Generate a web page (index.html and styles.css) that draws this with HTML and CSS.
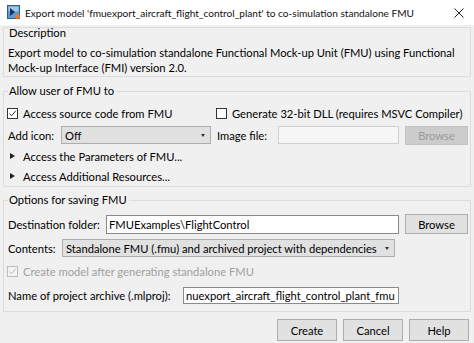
FILE: index.html
```html
<!DOCTYPE html>
<html>
<head>
<meta charset="utf-8">
<link rel="stylesheet" href="styles.css">
</head>
<body>
<div class="titlebar">
  <svg class="app-icon" width="14" height="15" viewBox="0 0 14 15">
    <rect x="0.5" y="0.5" width="12" height="13" fill="#5b9bd5" stroke="#2e5f8f"/>
    <rect x="1.5" y="1.5" width="10" height="5" fill="#9cc7ee"/>
    <path d="M3 3 L8 7 L3 11 Z" fill="#1f3550"/>
    <circle cx="10.5" cy="11.5" r="2.5" fill="#e8792b"/>
  </svg>
  <span class="title">Export model 'fmuexport_aircraft_flight_control_plant' to co-simulation standalone FMU</span>
  <svg class="close" width="10" height="10" viewBox="0 0 10 10">
    <path d="M0.5 0.5 L9.5 9.5 M9.5 0.5 L0.5 9.5" stroke="#222" stroke-width="1"/>
  </svg>
</div>
<div class="content">
  <div class="desc">
    <div class="desc-title">Description</div>
    <div class="desc-text">Export model to co-simulation standalone Functional Mock-up Unit (FMU) using Functional<br>Mock-up Interface (FMI) version 2.0.</div>
  </div>

  <fieldset class="group allow">
    <legend>Allow user of FMU to</legend>
    <div class="row r22">
      <div class="col1">
        <span class="cb"><svg width="9" height="9" viewBox="0 0 9 9"><path d="M1.5 4.5 L3.5 6.8 L7.8 1.8" fill="none" stroke="#333" stroke-width="1"/></svg></span>
        <span>Access source code from FMU</span>
      </div>
      <div class="col2">
        <span class="cb"></span>
        <span>Generate 32-bit DLL (requires MSVC Compiler)</span>
      </div>
    </div>
    <div class="row r22">
      <div class="col1">
        <span>Add icon:</span>
        <div class="select sel-icon"><span>Off</span><span class="arrow"></span></div>
      </div>
      <div class="col2">
        <span>Image file:</span>
        <div class="input disabled img-input"></div>
        <div class="btn disabled browse">Browse</div>
      </div>
    </div>
    <div class="row r20"><span class="tri"></span><span>Access the Parameters of FMU...</span></div>
    <div class="row r20"><span class="tri"></span><span>Access Additional Resources...</span></div>
  </fieldset>

  <fieldset class="group options">
    <legend>Options for saving FMU</legend>
    <div class="row r24">
      <span class="lbl lbl-dest">Destination folder:</span>
      <div class="input dest-input">FMUExamples\FlightControl</div>
      <div class="btn browse dest-browse">Browse</div>
    </div>
    <div class="row r24">
      <span class="lbl lbl-contents">Contents:</span>
      <div class="select sel-contents"><span>Standalone FMU (.fmu) and archived project with dependencies</span><span class="arrow"></span></div>
    </div>
    <div class="row r23 dis-text">
      <span class="cb cb-dis"><svg width="9" height="9" viewBox="0 0 9 9"><path d="M1.5 4.5 L3.5 6.8 L7.8 1.8" fill="none" stroke="#bdbdbd" stroke-width="1"/></svg></span>
      <span>Create model after generating standalone FMU</span>
    </div>
    <div class="row r24">
      <span class="lbl lbl-name">Name of project archive (.mlproj):</span>
      <div class="input name-input">nuexport_aircraft_flight_control_plant_fmu</div>
    </div>
  </fieldset>

  <div class="buttons">
    <div class="btn action">Create</div>
    <div class="btn action">Cancel</div>
    <div class="btn action">Help</div>
  </div>
</div>
</body>
</html>
```

FILE: styles.css
```css
* { box-sizing: border-box; }
html, body { margin: 0; padding: 0; }
body {
  width: 474px;
  height: 343px;
  overflow: hidden;
  background: #f0f0f0;
  font-family: Lato, "Open Sans", sans-serif;
  font-size: 11.2px;
  color: #000;
}
.titlebar {
  height: 25px;
  background: #fff;
  display: flex;
  align-items: center;
}
.app-icon { margin-left: 7px; flex: none; }
.title { margin-left: 4px; font-size: 10.1px; white-space: nowrap; color: #111; }
.close { margin-left: auto; margin-right: 10px; flex: none; }

.content { padding: 2px 3px 0 3px; }

.desc {
  border: 1px solid #dcdcdc;
  padding: 0 4px 1px 4px;
}
.desc-title { line-height: 10px; padding-left: 1px; }
.desc-text { margin-top: 7px; line-height: 15px; white-space: nowrap; }

.group {
  margin: 0;
  border: 1px solid #dcdcdc;
  padding: 3px 2px 0 4px;
  min-width: 0;
}
.group legend {
  padding: 0 2px 0 1px;
  line-height: 16px;
}
.allow { margin-top: 6px; }
.options { margin-top: 5px; padding-top: 4px; padding-bottom: 4px; }

.row { display: flex; align-items: center; white-space: nowrap; }
.r20 { height: 20px; }
.r22 { height: 22px; }
.r23 { height: 23px; }
.r24 { height: 24px; }

.col1 { width: 209px; display: flex; align-items: center; }
.col2 { flex: 1; display: flex; align-items: center; }

.cb {
  width: 11px;
  height: 11px;
  border: 1px solid #333;
  background: #fff;
  margin-left: -1px;
  margin-right: 5px;
  display: inline-flex;
  align-items: center;
  justify-content: center;
  flex: none;
}
.cb-dis { border-color: #bdbdbd; background: #f4f4f4; }
.dis-text { color: #a0a0a0; }

.select {
  height: 18px;
  background: #e1e1e1;
  border: 1px solid #adadad;
  display: flex;
  align-items: center;
  padding-left: 3px;
  padding-right: 5px;
}
.select span:first-child { flex: 1; }
.arrow {
  width: 0; height: 0;
  border-left: 2.5px solid transparent;
  border-right: 2.5px solid transparent;
  border-top: 3px solid #333;
}
.sel-icon { width: 150px; margin-left: auto; margin-right: 6px; }
.sel-contents { width: 333px; }

.input {
  height: 19px;
  background: #fff;
  border: 1px solid #8a8a8a;
  display: flex;
  align-items: center;
  padding-left: 2px;
  overflow: hidden;
  white-space: nowrap;
}
.input.disabled { background: #f6f6f6; border-color: #cfcfcf; }
.img-input { width: 121px; margin-left: auto; height: 18px; }
.dest-input { width: 293px; }
.name-input { width: 216px; height: 17px; }

.btn {
  background: #e1e1e1;
  border: 1px solid #adadad;
  display: flex;
  align-items: center;
  justify-content: center;
}
.btn.disabled { background: #cccccc; border-color: #c4c4c4; color: #9a9a9a; }
.browse { width: 63px; height: 19px; margin-left: 6px; }
.dest-browse { height: 20px; }

.tri {
  width: 0; height: 0;
  border-left: 5px solid #222;
  border-top: 3.5px solid transparent;
  border-bottom: 3.5px solid transparent;
  margin-left: 2px;
  margin-right: 8px;
}

.lbl { flex: none; }
.lbl-dest { width: 98px; }
.lbl-contents { width: 54px; }
.lbl-name { width: 175px; }

.buttons {
  display: flex;
  justify-content: flex-end;
  gap: 6px;
  margin-top: 7px;
  padding-right: 2px;
}
.action { width: 60px; height: 22px; }
```
